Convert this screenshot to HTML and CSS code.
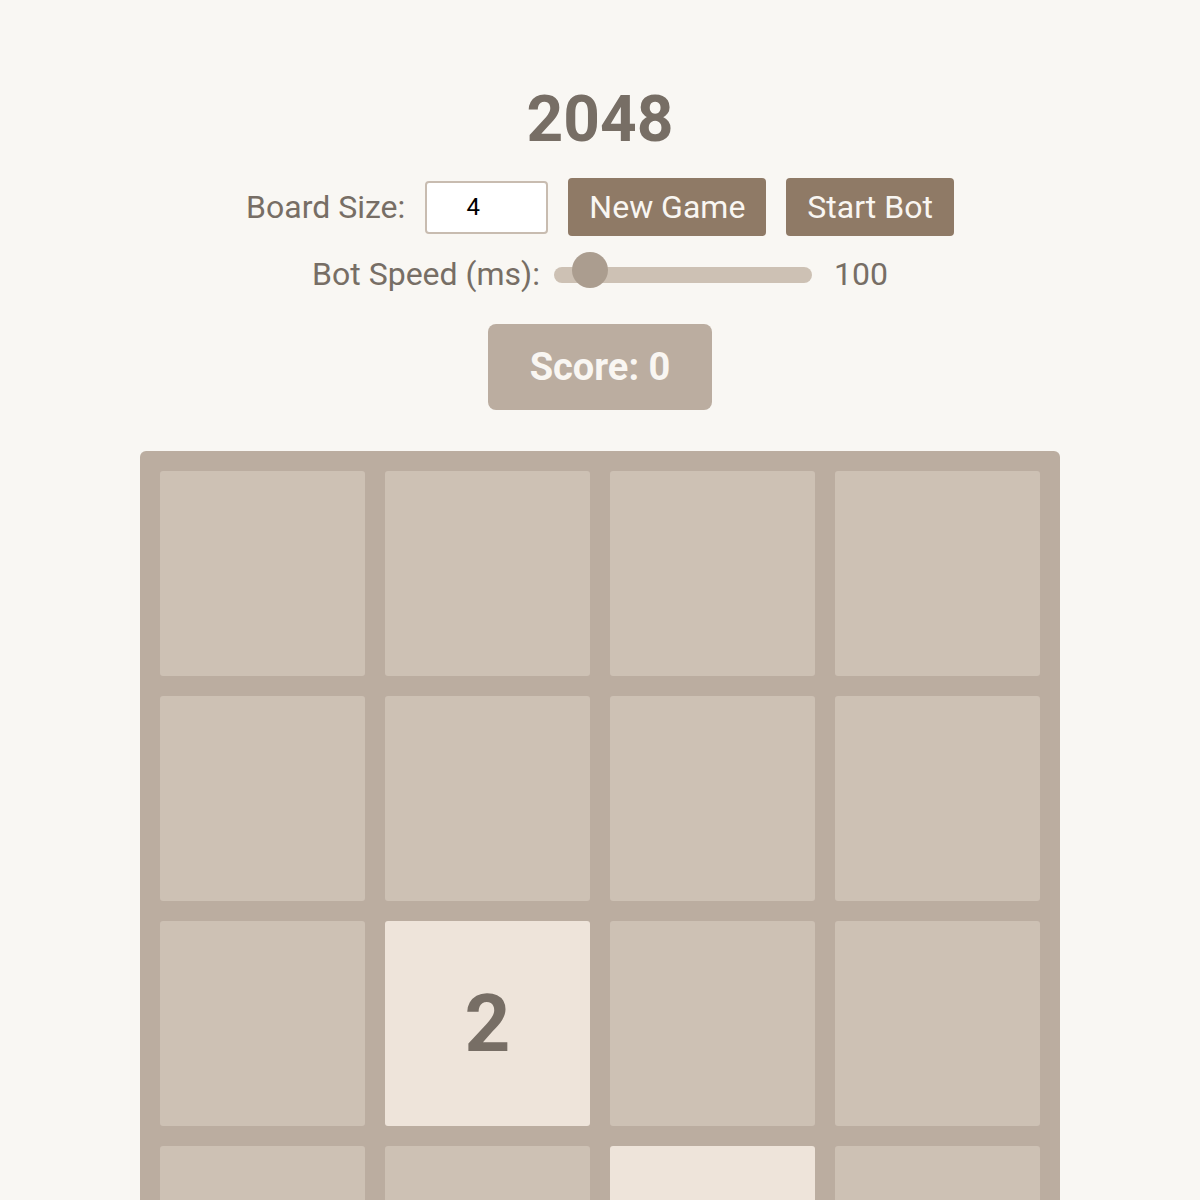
FILE: index.html
```html
<!DOCTYPE html>
<html>
<head>
<meta charset="utf-8">
<title>2048</title>
<link rel="stylesheet" href="styles.css">
</head>
<body>
<div class="app">
  <h1 class="title">2048</h1>
  <div class="controls">
    <label class="label" for="size">Board Size:</label>
    <input class="size-input" id="size" type="number" value="4" min="2" max="8">
    <button class="btn">New Game</button>
    <button class="btn">Start Bot</button>
  </div>
  <div class="speed">
    <label class="label" for="speed">Bot Speed (ms):</label>
    <input class="slider" id="speed" type="range" min="20" max="1000" value="100">
    <span class="label speed-value">100</span>
  </div>
  <div class="score">Score: 0</div>
  <div class="board">
    <div class="cell"></div>
    <div class="cell"></div>
    <div class="cell"></div>
    <div class="cell"></div>
    <div class="cell"></div>
    <div class="cell"></div>
    <div class="cell"></div>
    <div class="cell"></div>
    <div class="cell"></div>
    <div class="cell tile-2">2</div>
    <div class="cell"></div>
    <div class="cell"></div>
    <div class="cell"></div>
    <div class="cell"></div>
    <div class="cell tile-2">2</div>
    <div class="cell"></div>
  </div>
</div>
</body>
</html>
```
FILE: styles.css
```css
html, body {
  margin: 0;
  padding: 0;
  background: #f9f7f3;
  font-family: Roboto, "Liberation Sans", sans-serif;
  color: #776e65;
}

.app {
  display: flex;
  flex-direction: column;
  align-items: center;
  padding-top: 82px;
}

.title {
  margin: 0;
  font-size: 64px;
  font-weight: 700;
  line-height: 75px;
  color: #776e65;
}

.controls {
  display: flex;
  align-items: center;
  gap: 20px;
  margin-top: 21px;
}

.label {
  font-size: 32px;
  line-height: 37px;
  color: #776e65;
}

.size-input {
  box-sizing: border-box;
  width: 123px;
  height: 53px;
  border: 2px solid #c8bcb0;
  border-radius: 4px;
  background: #fff;
  font-family: Roboto, "Liberation Sans", sans-serif;
  font-size: 24px;
  color: #000;
  text-align: center;
  padding: 0 16px 0 4px;
}

.btn {
  height: 58px;
  padding: 0 21px;
  border: none;
  border-radius: 4px;
  background: #8f7a66;
  color: #f9f6f2;
  font-family: Roboto, "Liberation Sans", sans-serif;
  font-size: 32px;
}

.speed {
  display: flex;
  align-items: center;
  gap: 14px;
  margin-top: 20px;
}

.slider {
  -webkit-appearance: none;
  appearance: none;
  width: 258px;
  height: 16px;
  border-radius: 8px;
  background: #cdc1b4;
  margin: 0 8px 0 0;
  outline: none;
}

.slider::-webkit-slider-thumb {
  -webkit-appearance: none;
  appearance: none;
  width: 36px;
  height: 36px;
  border-radius: 50%;
  background: #ab9d8f;
  border: none;
  transform: translateY(-5px);
}

.score {
  margin-top: 31px;
  width: 224px;
  height: 86px;
  border-radius: 8px;
  background: #bbada0;
  color: #f9f6f2;
  font-size: 38px;
  font-weight: 700;
  display: flex;
  align-items: center;
  justify-content: center;
}

.board {
  margin-top: 41px;
  width: 920px;
  box-sizing: border-box;
  padding: 20px;
  background: #bbada0;
  border-radius: 6px;
  display: grid;
  grid-template-columns: repeat(4, 1fr);
  grid-auto-rows: 205px;
  gap: 20px;
}

.cell {
  background: #cdc1b4;
  border-radius: 3px;
  display: flex;
  align-items: center;
  justify-content: center;
  font-size: 80px;
  font-weight: 700;
  color: #776e65;
}

.tile-2 {
  background: #eee4da;
}
```
